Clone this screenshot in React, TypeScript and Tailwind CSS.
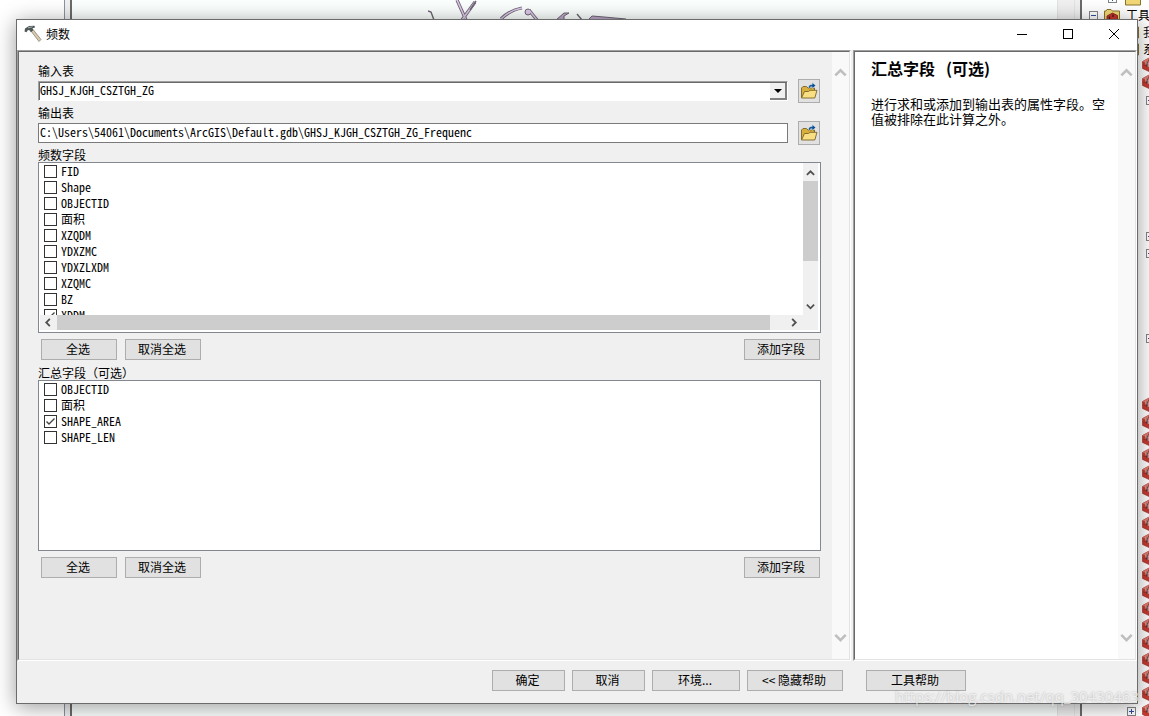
import { useState } from 'react';
import type { ReactNode } from 'react';
import clsx from 'clsx';

const FREQUENCY_FIELDS = ['FID', 'Shape', 'OBJECTID', '面积', 'XZQDM', 'YDXZMC', 'YDXZLXDM', 'XZQMC', 'BZ', 'XDDM'];
const SUMMARY_FIELDS = ['OBJECTID', '面积', 'SHAPE_AREA', 'SHAPE_LEN'];

type Direction = 'up' | 'down' | 'left' | 'right';

const CHEVRONS: Record<Direction, string> = {
  up: 'M1 6.5 L5 2.5 L9 6.5',
  down: 'M1 3 L5 7 L9 3',
  left: 'M6.5 1 L2.5 5 L6.5 9',
  right: 'M3.5 1 L7.5 5 L3.5 9',
};

function Chevron({ dir, className }: { dir: Direction; className?: string }) {
  return (
    <svg viewBox="0 0 10 10" className={clsx('shrink-0 fill-none', className)}>
      <path d={CHEVRONS[dir]} stroke="currentColor" strokeWidth="2" />
    </svg>
  );
}

function HammerIcon() {
  return (
    <svg viewBox="0 0 18 18" className="size-[18px] shrink-0">
      <path d="M7 6 L9 4.5 L17 14.5 L15 16.5 Z" fill="#d9cbb0" stroke="#8b8272" strokeWidth="0.8" />
      <path d="M0.5 6.5 L1 3.5 L5 1 L10.5 0.8 L11 2.5 L8.5 3.2 L9.5 5 L7 7.2 L5.2 5 L3.8 5.2 L2.5 7.2 Z" fill="#4f5757" />
      <path d="M4 2.8 L8.5 1.8" stroke="#a9b3b3" strokeWidth="1" />
    </svg>
  );
}

function OpenFolderIcon() {
  return (
    <svg viewBox="0 0 18 18" className="size-[18px]">
      <path d="M1.5 16 V6 L3 4.5 H6.5 L8 6 H14.5 V9" fill="#d8ae3c" stroke="#7a6424" strokeWidth="0.9" />
      <path d="M1.5 16 L4.5 9.5 H8.5 L10 8.3 H17 L14.8 16 Z" fill="#f8df83" stroke="#7a6424" strokeWidth="0.9" />
      <path d="M8.5 5.5 C8.6 3.2 10 2.4 12.2 2.6 V0.6 L15.8 3.6 L12.2 6.6 V4.8 C10.8 4.6 10 5 9.6 6.4 Z" fill="#0b4f94" stroke="#fff" strokeWidth="0.4" />
    </svg>
  );
}

function ToolboxIcon() {
  return (
    <svg viewBox="0 0 16 16" className="size-4 shrink-0">
      <path d="M0.5 4.5 L7 1 L15 4 V11 L8 15 L0.5 11.5 Z" fill="#c63a2f" stroke="#93291f" strokeWidth="0.6" />
      <path d="M0.5 4.5 L7 1 L15 4 L8 7 Z" fill="#e0796c" />
      <path d="M0.8 8 L8 10 L15 7" fill="none" stroke="#a02d24" strokeWidth="0.8" />
      <path d="M5 4.5 V9.5" stroke="#333" strokeWidth="1.2" />
      <path d="M4 4.5 V7.5 M6.2 6 V10" stroke="#e8e4e2" strokeWidth="0.8" />
      <path d="M7 2.5 V4.5" stroke="#333" strokeWidth="1" />
    </svg>
  );
}

function ToolboxFolderIcon({ toolbox }: { toolbox?: boolean }) {
  return (
    <svg viewBox="0 0 16 16" className="size-4 shrink-0">
      <path d="M0.5 14 V3 H2 L3 1.5 H7 L8.5 3 H15.5 V14 Z" fill="#f1d775" stroke="#8a742a" strokeWidth="1" />
      {toolbox && <path d="M3 8 L8.5 5 L13.5 7.5 V12.5 L8 15 L3 12.5 Z" fill="#c9342a" stroke="#7d211b" strokeWidth="0.8" />}
      {toolbox && <path d="M5.5 8.5 V11 M9 6.5 V9" stroke="#3a1b19" strokeWidth="1.2" />}
    </svg>
  );
}

function Expander({ open }: { open?: boolean }) {
  return (
    <svg viewBox="0 0 9 9" className="size-[9px] shrink-0">
      <rect x="0.5" y="0.5" width="8" height="8" fill="#fff" stroke="#848484" />
      <path d={open ? 'M2 4.5 H7' : 'M2 4.5 H7 M4.5 2 V7'} stroke="#2f4f9f" />
    </svg>
  );
}

// Catalog tree behind the dialog, mostly covered by it
function TreeRow({ index }: { index: number }) {
  const row = 'flex h-[17px] items-center leading-4';
  if (index === 0) {
    return (
      <div className={clsx(row, 'gap-2 pl-[26px]')}>
        <Expander />
        <ToolboxFolderIcon />
        <span className="pb-0.5">工</span>
      </div>
    );
  }
  if (index === 1) {
    return (
      <div className={clsx(row, 'gap-[6px] pl-[7px]')}>
        <Expander open />
        <ToolboxFolderIcon toolbox />
        <span className="pb-0.5">工具</span>
      </div>
    );
  }
  if (index === 2 || index === 3) {
    return (
      <div className={clsx(row, 'gap-1 pb-0.5 pl-[41px]')}>
        <ToolboxFolderIcon />
        <span>{index === 2 ? '我' : '系'}</span>
      </div>
    );
  }
  if (index === 4 || index === 5 || index >= 24) {
    return (
      <div className={clsx(row, 'gap-[6px] pb-[3px] pl-[45px]')}>
        <Expander />
        <ToolboxIcon />
      </div>
    );
  }
  if ([6, 14, 15, 20].includes(index)) {
    return (
      <div className={clsx(row, 'pl-16')}>
        <Expander open={index !== 20} />
      </div>
    );
  }
  return <div className={row} />;
}

function Backdrop() {
  return (
    <div aria-hidden="true" className="absolute inset-0 flex overflow-hidden bg-white">
      <div className="w-16 shrink-0" />
      <div className="w-2 shrink-0 border-l border-r-2 border-l-[#8a93a3] border-r-[#6b6b6b] bg-[#f0f0f0]" />
      <div className="min-w-0 flex-1 bg-[#fbfffd]">
        <svg viewBox="0 0 200 20" className="ml-[356px] h-5 w-[200px] fill-none">
          <g stroke="#6d6572" strokeWidth="3.2">
            <path d="M29 0 L38 20 M47 2 L34 20 M73 19 Q82 10 94 8 M101 10 L109 20" />
          </g>
          <circle cx="100" cy="12" r="3" fill="#ddc6ea" stroke="#6d6572" />
          <g stroke="#ddc6ea" strokeWidth="1.6">
            <path d="M29 0 L38 20 M47 2 L34 20 M73 19 Q82 10 94 8 M101 10 L109 20" />
          </g>
          <path d="M0 11 L3 12 L6 20 M42 10 L48 1 M149 14 L154 20" stroke="#6d6572" strokeWidth="1.4" />
          <path d="M128 20 L136 13 H141 L136 16 V20 Z M160 20 L164 16 L176 17 L198 19 V20 Z" fill="#bda6c9" stroke="#6d6572" />
        </svg>
      </div>
      <div className="w-[18px] shrink-0 border-x border-[#e3e3e3] bg-[#f0f0f0]" />
      <div className="w-[7px] shrink-0 border-r-2 border-[#6b6b6b] bg-[#f0f0f0]" />
      <div className="-mt-2.5 w-[67px] shrink-0 overflow-hidden whitespace-nowrap bg-white">
        {Array.from({ length: 43 }, (_, i) => (
          <TreeRow key={i} index={i} />
        ))}
      </div>
    </div>
  );
}

function SunkenPane({ className, children }: { className: string; children: ReactNode }) {
  return (
    <div className={clsx('flex border border-b-white border-l-[#a0a0a0] border-r-white border-t-[#a0a0a0]', className)}>
      <div className="flex min-w-0 flex-1 border border-b-[#e3e3e3] border-l-[#696969] border-r-[#e3e3e3] border-t-[#696969]">
        {children}
        <div className="flex w-[17px] shrink-0 flex-col items-center justify-between bg-[#f9f9f9] py-[15px] text-[#bfbfbf]">
          <Chevron dir="up" className="size-[13px]" />
          <Chevron dir="down" className="size-[13px]" />
        </div>
      </div>
    </div>
  );
}

function PushButton({ className, children }: { className: string; children: ReactNode }) {
  return (
    <button
      type="button"
      className={clsx('h-[21px] whitespace-nowrap border border-[#adadad] bg-[#e1e1e1] pb-0.5 pr-0.5 text-center leading-4 hover:border-[#0078d7] hover:bg-[#e5f1fb]', className)}
    >
      {children}
    </button>
  );
}

function BrowseButton({ label }: { label: string }) {
  return (
    <button
      type="button"
      aria-label={label}
      className="flex h-6 w-[22px] shrink-0 items-center justify-center border border-[#adadad] bg-[#e1e1e1]"
    >
      <OpenFolderIcon />
    </button>
  );
}

function FieldCheckbox({ name, checked, onToggle }: { name: string; checked: boolean; onToggle: () => void }) {
  return (
    <label className="flex h-4 items-center gap-1 pl-1">
      <span className="grid size-[13px] shrink-0">
        <input
          type="checkbox"
          checked={checked}
          onChange={onToggle}
          className="col-start-1 row-start-1 size-[13px] appearance-none border border-[#333] bg-white"
        />
        {checked && (
          <svg viewBox="0 0 13 13" className="pointer-events-none col-start-1 row-start-1 size-[13px] fill-none">
            <path d="M2.5 6.5 L5 9 L10.5 3.5" stroke="#444" strokeWidth="1.4" />
          </svg>
        )}
      </span>
      <span className="leading-4 [font-feature-settings:'hwid']">{name}</span>
    </label>
  );
}

function FieldList({ title, fields, initial, scroll }: { title: string; fields: string[]; initial: string[]; scroll?: boolean }) {
  const [selected, setSelected] = useState(initial);

  const toggle = (name: string) =>
    setSelected((prev) => (prev.includes(name) ? prev.filter((n) => n !== name) : [...prev, name]));

  return (
    <fieldset aria-label={title} className="flex h-[171px] min-w-0 flex-col border border-[#828790] bg-white p-px pt-0">
      <div className="flex min-h-0 flex-1">
        <div className="min-w-0 flex-1 overflow-hidden">
          {fields.map((name) => (
            <FieldCheckbox key={name} name={name} checked={selected.includes(name)} onToggle={() => toggle(name)} />
          ))}
        </div>
        {scroll && (
          <div className="mr-px flex w-[15px] shrink-0 flex-col items-center bg-[#f0f0f0] pb-1 pt-[6px] text-[#505050]">
            <Chevron dir="up" className="size-[9px]" />
            <div className="mt-[3px] h-20 w-full bg-[#cdcdcd]" />
            <div className="flex-1" />
            <Chevron dir="down" className="size-[9px]" />
          </div>
        )}
      </div>
      {scroll && (
        <div className="mb-px mr-px flex h-[15px] shrink-0 items-center bg-[#f0f0f0] pl-1 pr-5 text-[#505050]">
          <Chevron dir="left" className="size-[9px]" />
          <div className="ml-1 mr-[19px] h-full flex-1 bg-[#cdcdcd]" />
          <Chevron dir="right" className="size-[9px]" />
        </div>
      )}
    </fieldset>
  );
}

function ListActions() {
  return (
    <div className="mt-[6px] flex pl-[3px] pr-px">
      <PushButton className="w-[76px]">全选</PushButton>
      <PushButton className="ml-2 w-[76px]">取消全选</PushButton>
      <PushButton className="ml-auto w-[76px]">添加字段</PushButton>
    </div>
  );
}

function ParameterForm() {
  return (
    <form className="min-w-0 flex-1 pl-[19px] pr-[11px] pt-[11px]">
      <label htmlFor="in-table" className="block h-4 leading-4">
        输入表
      </label>
      <div className="flex items-center gap-[10px] pr-px">
        <div className="grid min-w-0 flex-1 border border-b-white border-l-[#a0a0a0] border-r-white border-t-[#a0a0a0]">
          <select
            id="in-table"
            className="col-start-1 row-start-1 h-[18px] appearance-none border-l border-t border-[#696969] bg-white pb-[3px] text-xs leading-[14px] outline-none [font-feature-settings:'hwid']"
          >
            <option>GHSJ_KJGH_CSZTGH_ZG</option>
          </select>
          <span className="pointer-events-none col-start-1 row-start-1 mt-px flex w-[17px] items-center justify-center justify-self-end border-b-2 border-r-2 border-[#808080] bg-[#f0f0f0]">
            <svg viewBox="0 0 8 4" className="h-1 w-2">
              <path d="M0 0 H8 L4 4 Z" />
            </svg>
          </span>
        </div>
        <BrowseButton label="浏览输入表" />
      </div>

      <label htmlFor="out-table" className="mt-0.5 block h-4 leading-4">
        输出表
      </label>
      <div className="flex items-center gap-[10px] pr-px">
        <input
          id="out-table"
          type="text"
          defaultValue="C:\Users\54061\Documents\ArcGIS\Default.gdb\GHSJ_KJGH_CSZTGH_ZG_Frequenc"
          className="h-5 min-w-0 flex-1 border border-[#7a7a7a] bg-white px-px pb-[3px] leading-[14px] outline-none [font-feature-settings:'hwid']"
        />
        <BrowseButton label="浏览输出表" />
      </div>

      <div className="mt-0.5 h-[15px] leading-4">频数字段</div>
      <FieldList title="频数字段" fields={FREQUENCY_FIELDS} initial={['XDDM']} scroll />
      <ListActions />

      <div className="mt-[5px] h-[15px] leading-4">汇总字段（可选）</div>
      <FieldList title="汇总字段（可选）" fields={SUMMARY_FIELDS} initial={['SHAPE_AREA']} />
      <ListActions />
    </form>
  );
}

function TitleBar() {
  return (
    <header className="flex h-[30px] shrink-0 items-center bg-white pb-0.5 pl-[7px]">
      <HammerIcon />
      <h1 className="ml-1 text-xs">频数</h1>
      <div className="ml-auto flex h-full">
        <button type="button" aria-label="最小化" className="flex w-[46px] items-center justify-center">
          <svg viewBox="0 0 12 12" className="size-3 fill-none stroke-black">
            <path d="M1 6.5 H11" />
          </svg>
        </button>
        <button type="button" aria-label="最大化" className="flex w-[46px] items-center justify-center">
          <svg viewBox="0 0 12 12" className="size-3 fill-none stroke-black">
            <rect x="1.5" y="1.5" width="9" height="9" />
          </svg>
        </button>
        <button type="button" aria-label="关闭" className="flex w-[46px] items-center justify-center">
          <svg viewBox="0 0 12 12" className="size-3 fill-none stroke-black">
            <path d="M1 1 L11 11 M11 1 L1 11" />
          </svg>
        </button>
      </div>
    </header>
  );
}

export default function App() {
  return (
    <div className="relative flex min-h-screen flex-col overflow-hidden pb-3 pl-4 pr-[11px] pt-[19px] font-['Noto_Sans_CJK_SC',sans-serif] text-xs text-black">
      <Backdrop />

      <main className="relative flex flex-1 flex-col border border-[#6b6b6b] bg-[#f0f0f0] shadow-[0_3px_20px_rgba(0,0,0,0.4)]">
        <TitleBar />

        <div className="flex flex-1 gap-[2px]">
          <SunkenPane className="min-w-0 flex-1">
            <ParameterForm />
          </SunkenPane>
          <SunkenPane className="w-[284px] shrink-0">
            <section className="min-w-0 flex-1 bg-white pl-4 pr-3 pt-[6px]">
              <h2 className="whitespace-pre text-base font-bold leading-5">汇总字段{'   '}(可选)</h2>
              <p className="mt-[18px] text-[13px] leading-[15px]">进行求和或添加到输出表的属性字段。空值被排除在此计算之外。</p>
            </section>
          </SunkenPane>
        </div>

        <footer className="flex h-[42px] shrink-0 justify-end gap-[7px] pr-[171px] pt-[9px]">
          <PushButton className="w-[73px]">确定</PushButton>
          <PushButton className="w-[73px]">取消</PushButton>
          <PushButton className="w-[88px]">环境...</PushButton>
          <PushButton className="w-24">&lt;&lt; 隐藏帮助</PushButton>
          <PushButton className="ml-4 w-[100px]">工具帮助</PushButton>
        </footer>
      </main>

      <span className="pointer-events-none absolute bottom-[9px] right-[10px] font-['Open_Sans',sans-serif] text-[15px] leading-[22px] text-white/70 [text-shadow:0_0_2px_rgba(0,0,0,0.3)]">
        https://blog.csdn.net/qq_30430463
      </span>
    </div>
  );
}
